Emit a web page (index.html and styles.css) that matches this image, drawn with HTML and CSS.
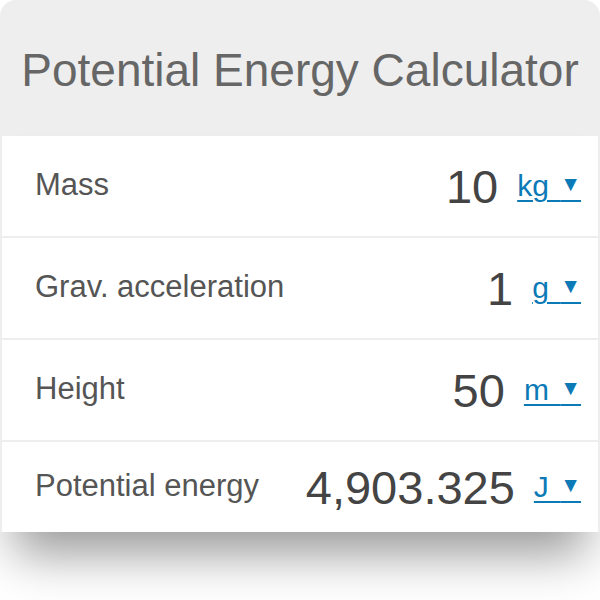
FILE: index.html
```html
<!DOCTYPE html>
<html>
<head>
<meta charset="utf-8">
<link rel="stylesheet" href="styles.css">
</head>
<body>
<div class="widget">
  <div class="header">Potential Energy Calculator</div>
  <div class="rows">
    <div class="row">
      <span class="label">Mass</span>
      <span class="value">10</span>
      <a class="unit">kg <span class="caret">▼</span></a>
    </div>
    <div class="row">
      <span class="label">Grav. acceleration</span>
      <span class="value">1</span>
      <a class="unit">g <span class="caret">▼</span></a>
    </div>
    <div class="row">
      <span class="label">Height</span>
      <span class="value">50</span>
      <a class="unit">m <span class="caret">▼</span></a>
    </div>
    <div class="row last">
      <span class="label">Potential energy</span>
      <span class="value">4,903.325</span>
      <a class="unit">J <span class="caret">▼</span></a>
    </div>
  </div>
</div>
</body>
</html>
```

FILE: styles.css
```css
html, body {
  margin: 0;
  padding: 0;
  background: #ffffff;
}
body {
  font-family: "Liberation Sans", Arial, sans-serif;
  width: 600px;
  height: 600px;
  overflow: hidden;
}
.widget {
  width: 600px;
}
.header {
  height: 136px;
  box-sizing: border-box;
  background: #eeeeee;
  border-radius: 16px 16px 0 0;
  display: flex;
  align-items: center;
  justify-content: center;
  font-size: 46px;
  color: #666666;
  padding-top: 4px;
}
.rows {
  background: #ffffff;
  border-left: 2px solid #eeeeee;
  border-right: 2px solid #eeeeee;
  box-shadow: 0 36px 46px -14px rgba(0, 0, 0, 0.4);
}
.row {
  height: 100px;
  display: flex;
  align-items: center;
  padding: 0 17px 0 33px;
  border-bottom: 2px solid #eeeeee;
}
.row.last {
  height: 90px;
  border-bottom: none;
}
.label {
  font-size: 31px;
  color: #555555;
  flex: 1;
  margin-top: -2px;
}
.value {
  font-size: 47px;
  color: #444444;
}
.unit {
  margin-left: 19px;
  font-size: 30px;
  color: #0c7ab6;
  text-decoration: underline;
  text-underline-offset: 4px;
  text-decoration-thickness: 2px;
  word-spacing: 3px;
}
.caret {
  font-size: 21px;
  vertical-align: 5px;
}
```
